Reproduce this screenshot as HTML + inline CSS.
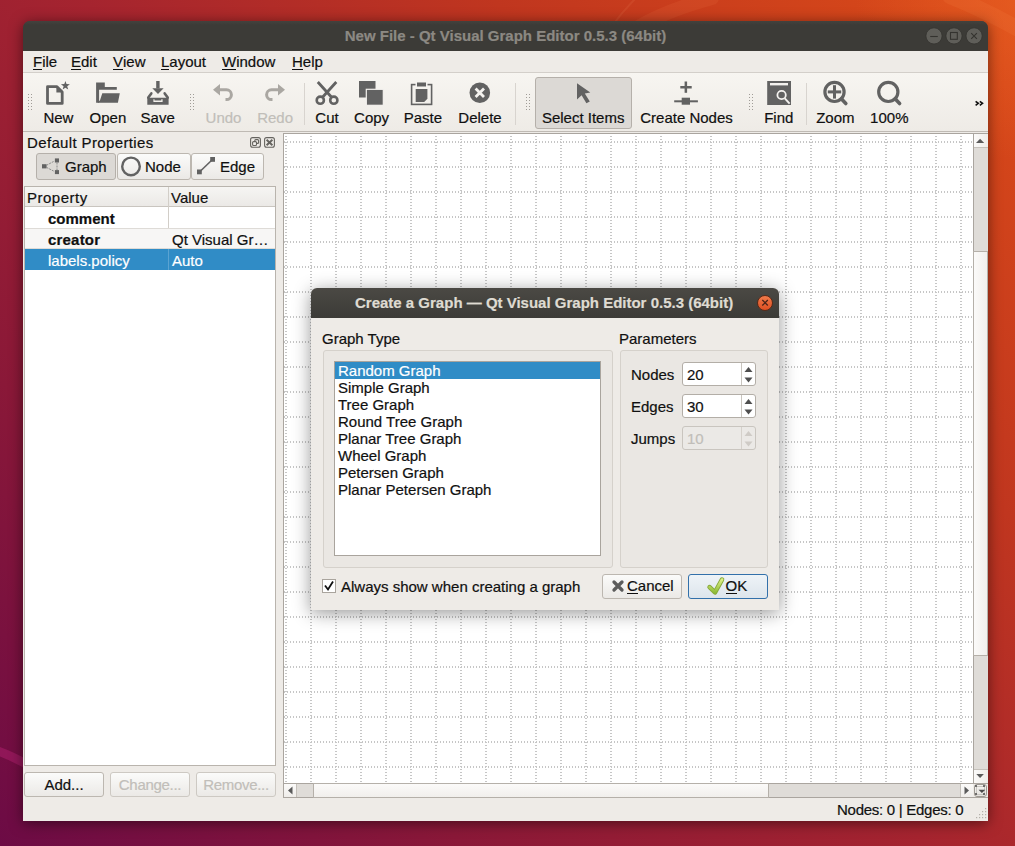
<!DOCTYPE html>
<html><head><meta charset="utf-8">
<style>
*{box-sizing:border-box;margin:0;padding:0}
html,body{width:1015px;height:846px;overflow:hidden}
body{position:relative;-webkit-text-stroke:0.2px currentColor;font-family:"Liberation Sans",sans-serif;font-size:15px;line-height:17px;color:#101010;
background:radial-gradient(circle 160px at 1015px 0px,rgba(238,105,40,0.45),rgba(238,105,40,0)),linear-gradient(45deg,#6c0b45 0%,#8a1838 25%,#a5242f 50%,#c0361f 72%,#dc4c18 100%);}
.a{position:absolute;white-space:nowrap}
.b{position:absolute}
svg{position:absolute;overflow:visible}
#win{position:absolute;left:23px;top:21px;width:965px;height:800px;background:linear-gradient(#3c3b37 0,#3c3b37 30px,#eeebe7 30px);border-radius:7px 7px 0 0;
 box-shadow:0 2px 14px rgba(0,0,0,0.5)}
#tb{position:absolute;left:23px;top:21px;width:965px;height:30px;background:linear-gradient(#43423e,#3c3b37 4px);border-radius:7px 7px 0 0}
#title{left:23px;width:965px;top:27px;text-align:center;font-weight:bold;color:#8c8983}
.wb{position:absolute;top:28px;width:16px;height:16px;border-radius:50%;background:#5c5b57}
#menu{position:absolute;left:23px;top:51px;width:965px;height:22px;background:#eeebe7;border-bottom:1px solid #d3cfca}
.mi{position:absolute;top:53px}
.mi u{text-decoration:none;display:inline-block;border-bottom:1px solid #101010;line-height:15px}
#toolbar{position:absolute;left:23px;top:73px;width:965px;height:59px;background:linear-gradient(#f7f5f1,#eeebe6);border-bottom:1px solid #bfbab4}
.tl{position:absolute;top:109px;width:120px;text-align:center}
.dis{color:#c1beb9}
.grip{position:absolute;top:94px;width:5px;height:17px;
 background-image:radial-gradient(circle at 0.5px 0.5px,#a09c97 0.7px,transparent 0.8px);background-size:3px 3px}
.sep{position:absolute;top:83px;width:1px;height:42px;background:#d8d4cf}
.btn{position:absolute;border:1px solid #bcb7b0;border-radius:3px;background:linear-gradient(#fbfbfa,#ebe9e6)}
.pressed{background:#dcd9d5;border-color:#b5b0aa}
.tbl{position:absolute;background:#fff;border:1px solid #b9b4ad}
.canvas{position:absolute;left:283px;top:133px;width:705px;height:665px;border:1px solid #aaa59f;background:#fff;overflow:hidden}
.sbtrack{position:absolute;background:#dfdcd8}
.slider{position:absolute;background:linear-gradient(90deg,#fbfaf9,#f1efec);border:1px solid #b5b0a9}
</style></head><body>
<svg width="1015" height="846" style="left:0;top:0">
 <g fill="none" stroke-linecap="round">
  <path d="M612,26 Q622,12 636,-2" stroke="rgba(255,170,120,0.10)" stroke-width="2"/>
  <path d="M640,26 Q668,10 712,-2" stroke="rgba(255,150,90,0.10)" stroke-width="14"/>
  <path d="M950,-4 Q985,10 1020,30" stroke="rgba(255,150,80,0.12)" stroke-width="16"/>
  <path d="M-5,750 Q10,755 30,766" stroke="rgba(200,40,130,0.35)" stroke-width="9"/>
 </g>
</svg>
<div id="win"></div>
<div id="tb"></div>
<div class="a" id="title">New File - Qt Visual Graph Editor 0.5.3 (64bit)</div>
<svg width="1015" height="846" style="left:0;top:0">
 <g fill="#5f5e59" stroke="#33322f" stroke-width="0.8">
  <circle cx="934" cy="35.9" r="8.1"/><circle cx="954" cy="35.9" r="8.1"/><circle cx="974.1" cy="35.9" r="8.1"/>
 </g>
 <g fill="none" stroke="#34332f" stroke-width="1.1">
  <path d="M930.2,36.5 H937.8"/>
  <rect x="950.5" y="32.5" width="6.8" height="6.8"/>
  <path d="M971.2,33.1 L976.9,38.8 M976.9,33.1 L971.2,38.8"/>
 </g>
</svg>
<div id="menu"></div>
<div class="a mi" style="left:33px"><u>F</u>ile</div>
<div class="a mi" style="left:71px"><u>E</u>dit</div>
<div class="a mi" style="left:113px"><u>V</u>iew</div>
<div class="a mi" style="left:161px"><u>L</u>ayout</div>
<div class="a mi" style="left:222px"><u>W</u>indow</div>
<div class="a mi" style="left:292px"><u>H</u>elp</div>
<div id="toolbar"></div>
<div class="btn pressed" style="left:535px;top:77px;width:97px;height:52px"></div>
<div class="grip" style="left:28px"></div>
<div class="grip" style="left:190px"></div>
<div class="grip" style="left:526px"></div>
<div class="grip" style="left:749px"></div>
<div class="sep" style="left:304px"></div>
<div class="sep" style="left:515px"></div>
<div class="sep" style="left:806px"></div>
<div class="a tl" style="left:-1.6px">New</div>
<div class="a tl" style="left:47.9px">Open</div>
<div class="a tl" style="left:97.7px">Save</div>
<div class="a tl dis" style="left:163.5px">Undo</div>
<div class="a tl dis" style="left:215.1px">Redo</div>
<div class="a tl" style="left:267px">Cut</div>
<div class="a tl" style="left:311.6px">Copy</div>
<div class="a tl" style="left:362.9px">Paste</div>
<div class="a tl" style="left:420px">Delete</div>
<div class="a tl" style="left:523.2px">Select Items</div>
<div class="a tl" style="left:626.5px">Create Nodes</div>
<div class="a tl" style="left:718.8px">Find</div>
<div class="a tl" style="left:775.3px">Zoom</div>
<div class="a tl" style="left:829.3px">100%</div>
<svg width="1015" height="846" style="left:0;top:0"><path d="M975.6,101.3 L978.3,103.3 L975.6,105.3 M979.8,101.3 L982.5,103.3 L979.8,105.3" fill="none" stroke="#111" stroke-width="1.6"/></svg>
<svg width="1015" height="846" style="left:0;top:0">
 <g fill="#626262" stroke="none">
  <!-- New -->
  <path d="M47.5,86.7 H57 L62.2,91.9 V103.4 H47.5 Z" fill="none" stroke="#626262" stroke-width="2.8" stroke-linejoin="round"/>
  <path d="M56.4,86.7 V92.5 H62.2 V91.9 L57,86.7 Z"/>
  <path d="M65.4,81 L66.5,84.1 L69.9,84.2 L67.2,86.3 L68.2,89.6 L65.4,87.7 L62.6,89.6 L63.6,86.3 L60.9,84.2 L64.3,84.1 Z"/>
  <!-- Open -->
  <path d="M96.1,82.6 H104.8 V87 H116.8 V89.7 H99.1 V102.8 H96.1 Z"/>
  <path d="M102.3,93.3 H119.8 L117.9,102.8 H97.5 L100,100.3 Z"/>
  <!-- Save -->
  <rect x="156.2" y="81" width="3.4" height="7.5"/>
  <path d="M152.3,88.3 H163.6 L158,93.9 Z"/>
  <path d="M151.3,93.4 L148.3,97.6 M164.7,93.4 L167.7,97.6" stroke="#626262" stroke-width="2.6" fill="none" stroke-linecap="round"/>
  <path d="M147.3,97.7 H168.6 V104.8 H147.3 Z M153.4,99.3 V102.1 H162.6 V99.3 H161.3 V100.4 H154.5 V99.3 Z" fill-rule="evenodd"/>
  <!-- Undo -->
  <g fill="#aaa7a2">
   <path d="M213,89.8 L220,84 V95.6 Z"/>
   <path d="M219,89.8 H226.5 A4.9,4.9 0 0 1 226.5,99.6 H225.5" fill="none" stroke="#aaa7a2" stroke-width="3"/>
  </g>
  <g fill="#aaa7a2" transform="translate(498,0) scale(-1,1)">
   <path d="M213,89.8 L220,84 V95.6 Z"/>
   <path d="M219,89.8 H226.5 A4.9,4.9 0 0 1 226.5,99.6 H225.5" fill="none" stroke="#aaa7a2" stroke-width="3"/>
  </g>
  <!-- Cut -->
  <g fill="none" stroke="#626262">
   <circle cx="320.3" cy="100.2" r="3.6" stroke-width="2.6"/>
   <circle cx="333.8" cy="100.2" r="3.6" stroke-width="2.6"/>
   <path d="M322.5,97.3 L336.3,82 M331.6,97.3 L317.8,82" stroke-width="2.8"/>
  </g>
  <!-- Copy -->
  <rect x="359" y="81" width="16.5" height="16.5"/>
  <rect x="366.3" y="89.3" width="17" height="16" stroke="#f4f2ef" stroke-width="1.2"/>
  <!-- Paste -->
  <rect x="411.6" y="84.6" width="20" height="19.8" fill="none" stroke="#626262" stroke-width="1.6"/>
  <rect x="415.5" y="82" width="12" height="5" fill="#f4f2ef"/>
  <rect x="417" y="82.5" width="9" height="4"/>
  <path d="M415.7,89 H427.4 V98.8 L424.2,102 H415.7 Z"/>
  <!-- Delete -->
  <circle cx="479.8" cy="92.8" r="10.3"/>
  <path d="M475.6,88.6 L484,97 M484,88.6 L475.6,97" stroke="#f4f2ef" stroke-width="2.8"/>
  <!-- Select -->
  <path d="M577,83.2 L590.3,92.6 L584.8,93.4 L589.8,101.6 L586.4,103.3 L581.6,95.3 L577,99.6 Z"/>
  <!-- Create Nodes -->
  <rect x="684.6" y="81.5" width="2.5" height="11.3"/>
  <rect x="680.3" y="86" width="11.4" height="2.5"/>
  <rect x="674.2" y="100.3" width="23.7" height="2"/>
  <rect x="681.7" y="97.7" width="8.3" height="7"/>
  <!-- Find -->
  <rect x="767.2" y="81" width="23.8" height="24"/>
  <rect x="770" y="83" width="18" height="2.4" fill="#f4f2ef"/>
  <circle cx="781.6" cy="95" r="4.2" fill="none" stroke="#f4f2ef" stroke-width="1.8"/>
  <path d="M784.8,98.3 L789.6,103.6" stroke="#f4f2ef" stroke-width="1.9"/>
  <!-- Zoom -->
  <circle cx="834.5" cy="91.9" r="9.6" fill="none" stroke="#626262" stroke-width="3.2"/>
  <path d="M841.3,98.8 L845.8,103.5" stroke="#626262" stroke-width="3.6" stroke-linecap="round"/>
  <rect x="827.8" y="90.4" width="13.4" height="3"/>
  <rect x="833" y="85.2" width="3" height="13.4"/>
  <circle cx="888.3" cy="91.9" r="9.6" fill="none" stroke="#626262" stroke-width="3.2"/>
  <path d="M895.1,98.8 L899.6,103.5" stroke="#626262" stroke-width="3.6" stroke-linecap="round"/>
 </g>
</svg>

<!-- Dock -->
<div class="a" style="left:27px;top:134px;letter-spacing:0.36px">Default Properties</div>
<svg width="1015" height="846" style="left:0;top:0">
 <g fill="none" stroke="#666460" stroke-width="1.1">
  <rect x="250.6" y="137.6" width="9.8" height="9.6" rx="2"/>
  <rect x="264.6" y="137.6" width="9.8" height="9.6" rx="2"/>
  <rect x="254.8" y="139.6" width="3.8" height="3.8" rx="1"/>
  <rect x="252.6" y="141.6" width="3.9" height="3.9" rx="1" fill="#f2f0ed"/>
  <path d="M266.6,139.7 L272.4,145.3 M272.4,139.7 L266.6,145.3" stroke-width="1.9"/>
 </g>
</svg>
<div class="btn pressed" style="left:36px;top:153px;width:80px;height:27px"></div>
<div class="btn" style="left:117px;top:153px;width:74px;height:27px"></div>
<div class="btn" style="left:191px;top:153px;width:73px;height:27px"></div>
<div class="a" style="left:65px;top:158px">Graph</div>
<div class="a" style="left:145px;top:158px">Node</div>
<div class="a" style="left:220px;top:158px">Edge</div>
<svg width="1015" height="846" style="left:0;top:0">
 <g fill="#626262">
  <rect x="42" y="164.2" width="4.6" height="4.2"/>
  <rect x="54.9" y="158.4" width="4.1" height="4.1"/>
  <rect x="54.9" y="170.1" width="4.1" height="4"/>
  <path d="M46.5,165.3 L54.5,161 M46.5,167.4 L54.5,171.5 M57,162.5 V170" stroke="#8a8a8a" stroke-width="1" fill="none" stroke-dasharray="2 1"/>
  <circle cx="131" cy="166.4" r="8.8" fill="none" stroke="#626262" stroke-width="2.4"/>
  <rect x="197" y="169.5" width="4.8" height="4.8"/>
  <rect x="210.2" y="157" width="4.8" height="4.8"/>
  <path d="M200,171.5 L212.5,159.5" stroke="#626262" stroke-width="1.6"/>
 </g>
</svg>
<div class="tbl" style="left:24px;top:186px;width:252px;height:580px"></div>
<div class="b" style="left:25px;top:187px;width:250px;height:20px;background:linear-gradient(#f6f5f3,#ebe9e6);border-bottom:1px solid #c9c5bf"></div>
<div class="b" style="left:168px;top:187px;width:1px;height:83px;background:#d2cec8"></div>
<div class="b" style="left:25px;top:228px;width:250px;height:21px;background:#f7f6f5;border-top:1px solid #dedbd7;border-bottom:1px solid #dedbd7"></div>
<div class="b" style="left:25px;top:249px;width:250px;height:21px;background:#308cc6"></div>
<div class="b" style="left:168px;top:249px;width:1px;height:21px;background:#5aa3d2"></div>
<div class="a" style="left:27px;top:189px;letter-spacing:0.5px">Property</div>
<div class="a" style="left:171px;top:189px">Value</div>
<div class="a" style="left:48px;top:209.5px;font-weight:bold">comment</div>
<div class="a" style="left:48px;top:230.5px;font-weight:bold;letter-spacing:0.2px">creator</div>
<div class="a" style="left:172px;top:230.5px">Qt Visual Gr&#8230;</div>
<div class="a" style="left:48px;top:252px;color:#fff">labels.policy</div>
<div class="a" style="left:172px;top:252px;color:#fff">Auto</div>
<div class="btn" style="left:24px;top:772px;width:80px;height:25px"></div>
<div class="btn" style="left:110px;top:772px;width:80px;height:25px;border-color:#cdc9c3"></div>
<div class="btn" style="left:196px;top:772px;width:80px;height:25px;border-color:#cdc9c3"></div>
<div class="a" style="left:24px;width:80px;text-align:center;top:776px">Add...</div>
<div class="a dis" style="left:110px;width:80px;text-align:center;top:776px;letter-spacing:-0.3px">Change...</div>
<div class="a dis" style="left:196px;width:80px;text-align:center;top:776px;letter-spacing:-0.3px">Remove...</div>

<!-- Canvas -->
<div class="canvas"></div>
<svg width="1015" height="846" style="left:0;top:0" shape-rendering="crispEdges">
 <defs>
  <pattern id="gv" x="0" y="0" width="25" height="3" patternUnits="userSpaceOnUse"><rect x="10" y="1" width="2" height="1" fill="#c6c6c6"/></pattern>
  <pattern id="gh" x="0" y="0" width="3" height="25" patternUnits="userSpaceOnUse"><rect x="2" y="16" width="1" height="2" fill="#c6c6c6"/></pattern>
 </defs>
 <rect x="284" y="134" width="689" height="649" fill="url(#gv)"/>
 <rect x="284" y="134" width="689" height="649" fill="url(#gh)"/>
</svg>
<!-- scrollbars -->
<div class="sbtrack" style="left:973px;top:134px;width:15px;height:649px;border-left:1px solid #aaa59f"></div>
<div class="b" style="left:974px;top:134px;width:14px;height:14px;background:linear-gradient(90deg,#fbfaf9,#efedea);border-bottom:1px solid #c5c1bb"></div>
<div class="slider" style="left:973px;top:251px;width:15px;height:405px"></div>
<div class="b" style="left:974px;top:769px;width:14px;height:14px;background:linear-gradient(90deg,#fbfaf9,#efedea);border-top:1px solid #c5c1bb"></div>
<div class="sbtrack" style="left:283px;top:783px;width:691px;height:15px;border-top:1px solid #aaa59f;border-bottom:1px solid #aaa59f;border-left:1px solid #aaa59f"></div>
<div class="b" style="left:284px;top:784px;width:13px;height:13px;background:linear-gradient(#fbfaf9,#efedea);border-right:1px solid #c5c1bb"></div>
<div class="slider" style="left:313px;top:783px;width:456px;height:15px;background:linear-gradient(#fbfaf9,#f1efec)"></div>
<div class="b" style="left:960px;top:784px;width:14px;height:13px;background:linear-gradient(#fbfaf9,#efedea);border-left:1px solid #c5c1bb"></div>
<div class="b" style="left:973px;top:783px;width:15px;height:15px;background:#eeebe7;border-top:1px solid #aaa59f"></div>
<div class="b" style="left:973px;top:797px;width:15px;height:1px;background:#aaa59f"></div>
<div class="b" style="left:973.5px;top:783.5px;width:13.5px;height:13.5px;background:linear-gradient(#f4f3f1,#e4e2de);border:1px solid #9d9993;border-radius:3px"></div>
<div class="b" style="left:975.5px;top:785.5px;width:9.5px;height:9.5px;border:1px solid #c9c6c1"></div>
<svg width="1015" height="846" style="left:0;top:0">
 <g fill="#4a4a4a">
  <circle cx="976" cy="786" r="1"/><circle cx="984" cy="786" r="1"/><circle cx="976" cy="794" r="1"/><circle cx="984" cy="794" r="1"/>
  <path d="M978.5,789.8 H985.3 L981.9,793 Z"/>
 </g>
 <g fill="#b4b0aa">
  <rect x="985" y="808" width="1.2" height="1.2"/>
  <rect x="982" y="811" width="1.2" height="1.2"/><rect x="985" y="811" width="1.2" height="1.2"/>
  <rect x="979" y="814" width="1.2" height="1.2"/><rect x="982" y="814" width="1.2" height="1.2"/><rect x="985" y="814" width="1.2" height="1.2"/>
  <rect x="976" y="817" width="1.2" height="1.2"/><rect x="979" y="817" width="1.2" height="1.2"/><rect x="982" y="817" width="1.2" height="1.2"/><rect x="985" y="817" width="1.2" height="1.2"/>
 </g>
</svg>
<svg width="1015" height="846" style="left:0;top:0">
 <g fill="#5a5a5a">
  <path d="M976,143 L984.2,143 L980.1,138.8 Z"/>
  <path d="M976.3,774 L983.9,774 L980.1,778 Z"/>
  <path d="M292.5,786.5 V794.5 L288,790.5 Z"/>
  <path d="M964.5,786.5 V794.5 L969,790.5 Z"/>
 </g>
</svg>
<!-- status -->
<div class="a" style="left:837px;top:801px;letter-spacing:-0.27px">Nodes: 0 | Edges: 0</div>

<!-- Dialog -->
<div class="b" style="left:311px;top:288px;width:468px;height:322px;background:#eeebe7;border-radius:6px 6px 0 0;box-shadow:0 3px 18px rgba(0,0,0,0.42)"></div>
<div class="b" style="left:311px;top:288px;width:468px;height:30px;background:linear-gradient(#4b4944,#3c3b37);border-radius:6px 6px 0 0"></div>
<div class="a" style="left:311px;width:434px;text-align:center;top:294px;font-weight:bold;color:#dfdbd2;text-align:left;width:auto;padding-left:44px">Create a Graph &#8212; Qt Visual Graph Editor 0.5.3 (64bit)</div>
<div class="b" style="left:756.8px;top:294.5px;width:16.5px;height:16.5px;border-radius:50%;background:linear-gradient(#f07a4a,#de4f22);border:1px solid #5a2a18"></div>
<svg width="1015" height="846" style="left:0;top:0"><path d="M762.3,300 L767.8,305.5 M767.8,300 L762.3,305.5" stroke="#4a2418" stroke-width="1.3"/></svg>
<div class="a" style="left:322px;top:329.5px">Graph Type</div>
<div class="a" style="left:619px;top:329.5px">Parameters</div>
<div class="b" style="left:323px;top:350px;width:290px;height:218px;border:1px solid #d5d1cb;border-radius:3px;background:#eae7e3"></div>
<div class="b" style="left:620px;top:350px;width:148px;height:218px;border:1px solid #d5d1cb;border-radius:3px;background:#eae7e3"></div>
<div class="b" style="left:334px;top:361px;width:267px;height:195px;background:#fff;border:1px solid #a9a49d"></div>
<div class="b" style="left:335px;top:362px;width:265px;height:17px;background:#308cc6"></div>
<div class="a" style="left:338px;top:362px;color:#fff">Random Graph</div>
<div class="a" style="left:338px;top:379px">Simple Graph</div>
<div class="a" style="left:338px;top:396px">Tree Graph</div>
<div class="a" style="left:338px;top:413px">Round Tree Graph</div>
<div class="a" style="left:338px;top:430px">Planar Tree Graph</div>
<div class="a" style="left:338px;top:447px">Wheel Graph</div>
<div class="a" style="left:338px;top:464px">Petersen Graph</div>
<div class="a" style="left:338px;top:481px">Planar Petersen Graph</div>
<div class="a" style="left:631px;top:366px">Nodes</div>
<div class="a" style="left:631px;top:398px">Edges</div>
<div class="a" style="left:631px;top:430px">Jumps</div>
<div class="b" style="left:682px;top:362px;width:74px;height:24px;background:#fff;border:1px solid #b3aea7;border-radius:3px"></div>
<div class="b" style="left:682px;top:394px;width:74px;height:24px;background:#fff;border:1px solid #b3aea7;border-radius:3px"></div>
<div class="b" style="left:682px;top:426px;width:74px;height:24px;background:#ebe9e6;border:1px solid #c9c5bf;border-radius:3px"></div>
<div class="b" style="left:741px;top:363px;width:1px;height:22px;background:#c9c5bf"></div>
<div class="b" style="left:741px;top:395px;width:1px;height:22px;background:#c9c5bf"></div>
<div class="b" style="left:741px;top:427px;width:1px;height:22px;background:#d5d1cb"></div>
<div class="a" style="left:687px;top:366px">20</div>
<div class="a" style="left:687px;top:398px">30</div>
<div class="a dis" style="left:687px;top:430px">10</div>
<svg width="1015" height="846" style="left:0;top:0">
 <g fill="#4e4e4e">
  <path d="M744.5,372 H752.5 L748.5,367 Z"/><path d="M744.5,377.5 H752.5 L748.5,382.5 Z"/>
  <path d="M744.5,404 H752.5 L748.5,399 Z"/><path d="M744.5,409.5 H752.5 L748.5,414.5 Z"/>
  <path d="M744.5,436 H752.5 L748.5,431 Z" fill="#cfcbc6"/><path d="M744.5,441.5 H752.5 L748.5,446.5 Z" fill="#cfcbc6"/>
 </g>
</svg>
<div class="b" style="left:322px;top:579px;width:14px;height:14px;background:#fff;border:1px solid #a9a49d"></div>
<svg width="1015" height="846" style="left:0;top:0"><path d="M325,585.5 L328,589.5 L333,581.5" fill="none" stroke="#101010" stroke-width="1.8"/></svg>
<div class="a" style="left:341px;top:578px">Always show when creating a graph</div>
<div class="btn" style="left:602px;top:574px;width:80px;height:25px"></div>
<div class="btn" style="left:688px;top:574px;width:80px;height:25px;border-color:#3270aa;background:linear-gradient(#eef3f7,#dde5ec)"></div>
<div class="a" style="left:627px;top:577px"><u style="text-decoration:none;border-bottom:1px solid #101010;display:inline-block;line-height:15px">C</u>ancel</div>
<div class="a" style="left:725.5px;top:577px"><u style="text-decoration:none;border-bottom:1px solid #101010;display:inline-block;line-height:15px">O</u>K</div>
<svg width="1015" height="846" style="left:0;top:0">
 <defs><linearGradient id="gk" x1="0" y1="0" x2="0" y2="1"><stop offset="0" stop-color="#dcee86"/><stop offset="1" stop-color="#8fbd38"/></linearGradient></defs>
 <path d="M614,582 L622,590 M622,582 L614,590" stroke="#5c5c5c" stroke-width="3.3" stroke-linecap="round"/>
 <path d="M709.6,587.2 L715,592.3 L722,579.6" fill="none" stroke="#86a83a" stroke-width="4.6" stroke-linecap="round" stroke-linejoin="round"/>
 <path d="M709.6,587.2 L715,592.3 L722,579.6" fill="none" stroke="url(#gk)" stroke-width="2.8" stroke-linecap="round" stroke-linejoin="round"/>
</svg>
</body></html>
